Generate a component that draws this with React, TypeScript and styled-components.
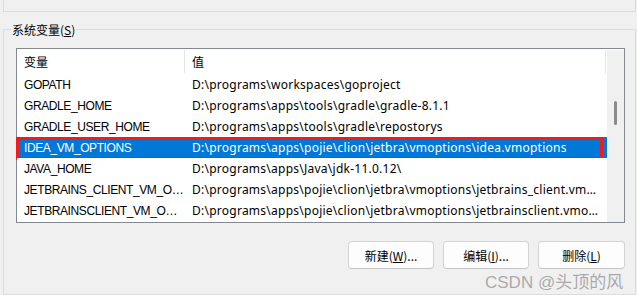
import React from "react";
import styled, { createGlobalStyle } from "styled-components";

const GlobalStyle = createGlobalStyle`
  html, body {
    margin: 0;
    padding: 0;
    background: #f0f0f0;
  }
  body {
    font-family: "Liberation Sans", "Noto Sans CJK SC", sans-serif;
    font-size: 12px;
    color: #000;
  }
`;

interface IVariable {
  name: string;
  value: string;
}

const variables: IVariable[] = [
  { name: "GOPATH", value: "D:\\programs\\workspaces\\goproject" },
  { name: "GRADLE_HOME", value: "D:\\programs\\apps\\tools\\gradle\\gradle-8.1.1" },
  { name: "GRADLE_USER_HOME", value: "D:\\programs\\apps\\tools\\gradle\\repostorys" },
  {
    name: "IDEA_VM_OPTIONS",
    value: "D:\\programs\\apps\\pojie\\clion\\jetbra\\vmoptions\\idea.vmoptions",
  },
  { name: "JAVA_HOME", value: "D:\\programs\\apps\\Java\\jdk-11.0.12\\" },
  {
    name: "JETBRAINS_CLIENT_VM_OPTIONS",
    value: "D:\\programs\\apps\\pojie\\clion\\jetbra\\vmoptions\\jetbrains_client.vmoptions",
  },
  {
    name: "JETBRAINSCLIENT_VM_OPTIONS",
    value: "D:\\programs\\apps\\pojie\\clion\\jetbra\\vmoptions\\jetbrainsclient.vmoptions",
  },
];

const SELECTED = "IDEA_VM_OPTIONS";

const Page = styled.div`
  position: relative;
  width: 637px;
  height: 295px;
  padding-left: 3px;
  box-sizing: border-box;
  overflow: hidden;
`;

const PrevGroup = styled.div`
  width: 633px;
  height: 12px;
  box-sizing: border-box;
  border: 1px solid #dcdcdc;
  border-top: none;
`;

const Group = styled.fieldset`
  width: 633px;
  height: 273px;
  box-sizing: border-box;
  margin: 10px 0 0 0;
  padding: 11px 10px 0 12px;
  border: 1px solid #dcdcdc;
  display: flex;
  flex-direction: column;
`;

const Legend = styled.legend`
  margin-left: -5px;
  padding: 0 1px;
  line-height: 15px;
  font-family: "Noto Sans CJK SC", "Liberation Sans", sans-serif;
  font-size: 12px;
`;

const Key = styled.span`
  text-decoration: underline;
  text-underline-offset: 1px;
`;

const ListBox = styled.div`
  height: 175px;
  box-sizing: border-box;
  border: 1px solid #848990;
  background: #fff;
  display: flex;
`;

const Table = styled.div`
  flex: 1;
  display: flex;
  flex-direction: column;
  min-width: 0;
`;

const HeaderRow = styled.div`
  height: 25px;
  display: grid;
  grid-template-columns: 168px 421px;
  align-items: stretch;
`;

const HeaderCell = styled.div`
  display: flex;
  align-items: center;
  padding-left: 7px;
  font-family: "Noto Sans CJK SC", "Liberation Sans", sans-serif;
  font-size: 12px;
  border-right: 1px solid #e5e5e5;
  margin: 1px 0 1px 0;
`;

const Row = styled.div<{ $selected?: boolean }>`
  position: relative;
  height: 21px;
  display: grid;
  grid-template-columns: 168px 421px;
  align-items: center;
  background: ${(p) => (p.$selected ? "#0078d7" : "#fff")};
  color: ${(p) => (p.$selected ? "#fff" : "#000")};
`;

const Cell = styled.div<{ $value?: boolean }>`
  min-width: 0;
  padding-left: 7px;
  padding-right: ${(p) => (p.$value ? "5px" : "1px")};
  white-space: nowrap;
  overflow: hidden;
  text-overflow: ellipsis;
  font-family: ${(p) =>
    p.$value ? `"Noto Sans", "Liberation Sans", sans-serif` : `"Liberation Sans", sans-serif`};
  letter-spacing: ${(p) => (p.$value ? "0.25px" : "-0.4px")};
  line-height: 16px;
`;

const Highlight = styled.div`
  position: absolute;
  left: -1px;
  top: 0;
  right: 4px;
  bottom: -2px;
  border: 3px solid #f21b1b;
  pointer-events: none;
`;

const ScrollTrack = styled.div`
  width: 17px;
  margin-top: 1px;
  background: #f0f0f0;
  display: flex;
  justify-content: center;
`;

const ScrollThumb = styled.div`
  margin-top: 51px;
  width: 3px;
  height: 24px;
  border-radius: 2px;
  background: #8a8a8a;
`;

const Buttons = styled.div`
  display: flex;
  justify-content: flex-end;
  gap: 9px;
  margin-top: 18px;
`;

const Button = styled.button<{ $w: number }>`
  width: ${(p) => p.$w}px;
  height: 28px;
  box-sizing: border-box;
  border: 1px solid #d3d3d3;
  border-bottom-color: #c4c4c4;
  border-radius: 4px;
  background: #fdfdfd;
  font-family: "Noto Sans CJK SC", "Liberation Sans", sans-serif;
  font-size: 12px;
  color: #000;
  padding: 0;
`;

const Watermark = styled.div`
  position: absolute;
  left: 485px;
  top: 268px;
  font-family: "Liberation Sans", "Noto Sans CJK SC", sans-serif;
  font-size: 17px;
  color: rgba(120, 120, 120, 0.6);
  white-space: nowrap;
  pointer-events: none;
`;

export default function App() {
  return (
    <Page>
      <GlobalStyle />
      <PrevGroup />
      <Group>
        <Legend>
          系统变量(<Key>S</Key>)
        </Legend>
        <ListBox>
          <Table>
            <HeaderRow>
              <HeaderCell>变量</HeaderCell>
              <HeaderCell>值</HeaderCell>
            </HeaderRow>
            {variables.map((v) => (
              <Row key={v.name} $selected={v.name === SELECTED}>
                <Cell>{v.name}</Cell>
                <Cell $value>{v.value}</Cell>
                {v.name === SELECTED && <Highlight />}
              </Row>
            ))}
          </Table>
          <ScrollTrack>
            <ScrollThumb />
          </ScrollTrack>
        </ListBox>
        <Buttons>
          <Button $w={86}>
            新建(<Key>W</Key>)...
          </Button>
          <Button $w={86}>
            编辑(<Key>I</Key>)...
          </Button>
          <Button $w={87}>
            删除(<Key>L</Key>)
          </Button>
        </Buttons>
      </Group>
      <Watermark>CSDN @头顶的风</Watermark>
    </Page>
  );
}
